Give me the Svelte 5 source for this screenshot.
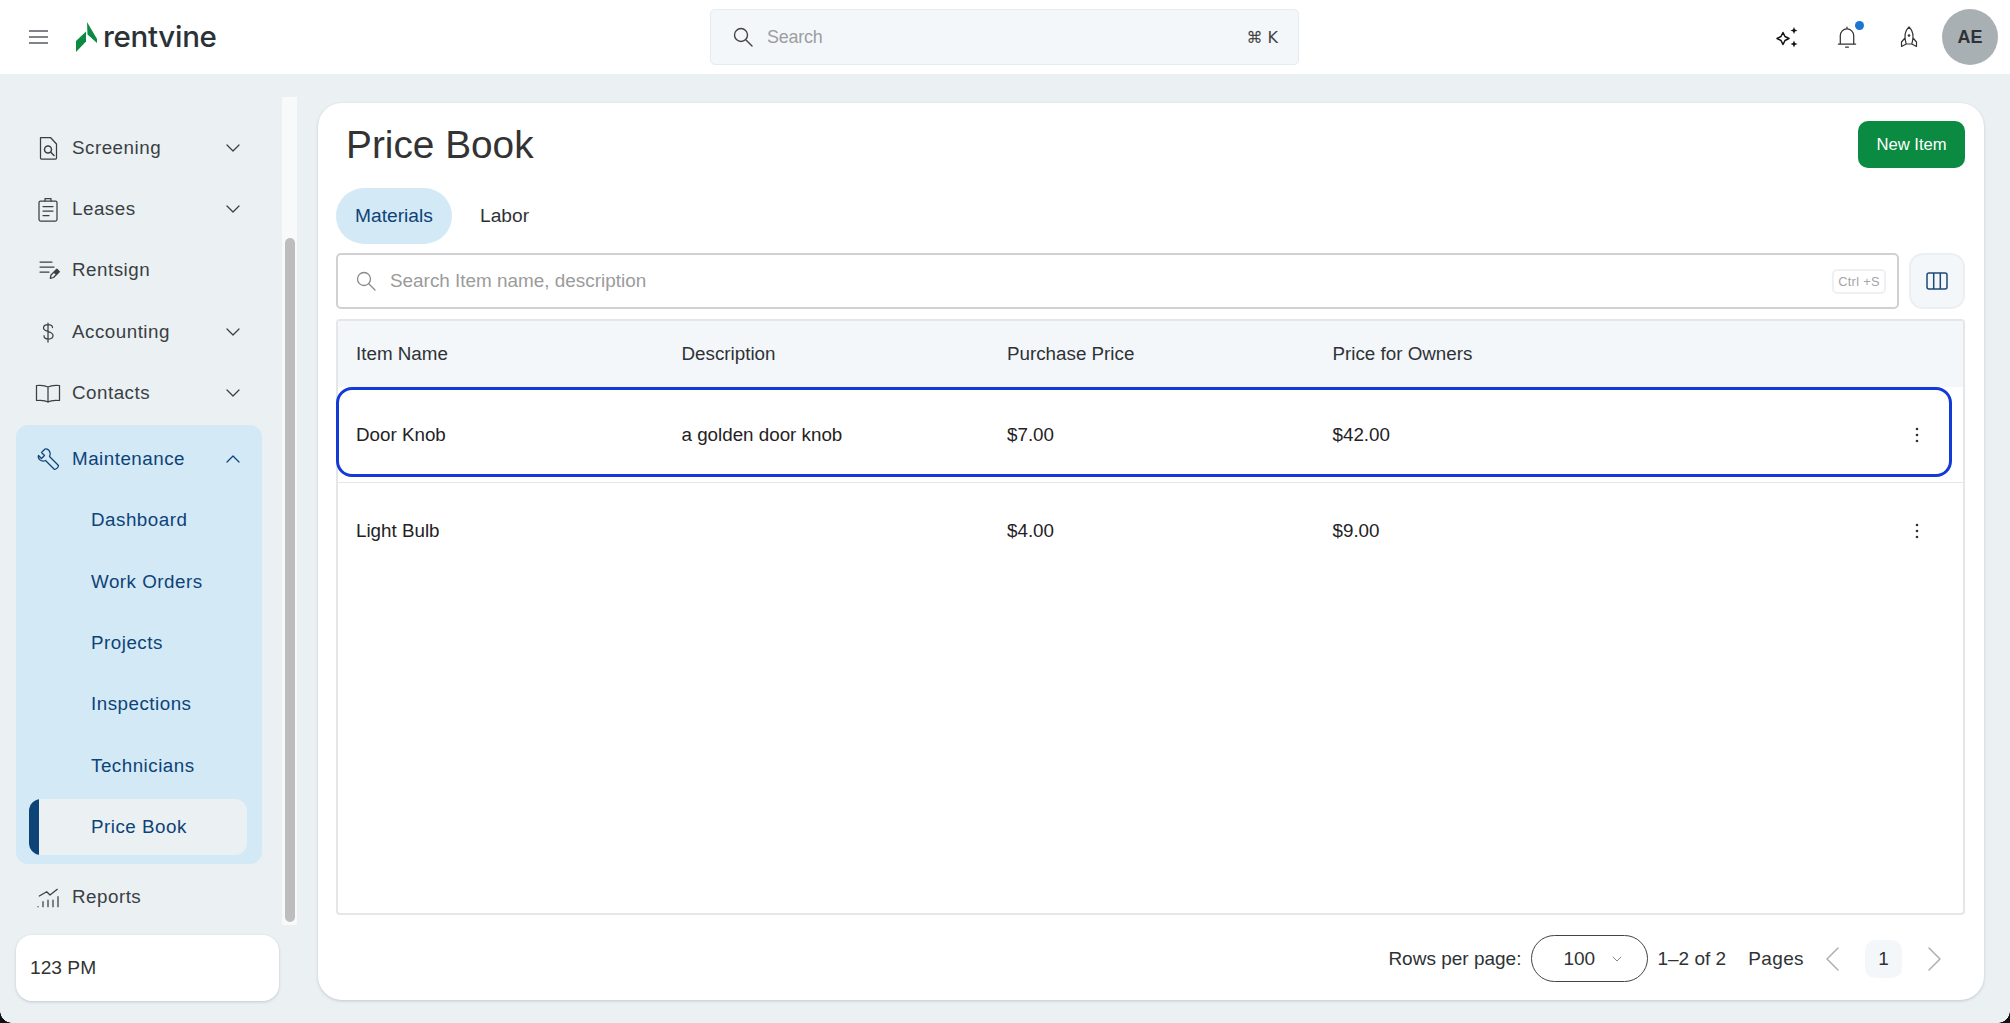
<script lang="ts">
	const topItems = [
		{ label: 'Screening', icon: 'screening', chevron: true },
		{ label: 'Leases', icon: 'leases', chevron: true },
		{ label: 'Rentsign', icon: 'rentsign', chevron: false },
		{ label: 'Accounting', icon: 'accounting', chevron: true },
		{ label: 'Contacts', icon: 'contacts', chevron: true },
	];
	const subItems = ['Dashboard', 'Work Orders', 'Projects', 'Inspections', 'Technicians'];
	const rows = [
		{ name: 'Door Knob', description: 'a golden door knob', purchase: '$7.00', owners: '$42.00', focused: true },
		{ name: 'Light Bulb', description: '', purchase: '$4.00', owners: '$9.00', focused: false },
	];
</script>

{#snippet navIcon(name)}
	<svg class="nav-icon" viewBox="0 0 28 28" fill="none" stroke="currentColor" stroke-width="1.25" stroke-linecap="round" stroke-linejoin="round">
		{#if name === 'screening'}
			<path d="M6.500 3.500h10l6 6.500v14a1 1 0 0 1-1 1h-14a1 1 0 0 1-1-1z" />
			<circle cx="14" cy="15.500" r="3.500" stroke-width="1.500" />
			<path d="M16.800 18.300l3.200 3.200" stroke-width="1.500" />
		{:else if name === 'leases'}
			<rect x="5" y="6" width="18" height="20" rx="1.500" />
			<path d="M11 6V3.500h6V6M9 11.500h10M9 16h10M9 20.500h6" />
		{:else if name === 'rentsign'}
			<path d="M6 6h12M6 11h14M6 16h9" />
			<path d="M16.300 22.300l.7-3.300 5.800-5.800 2.500 2.500-5.800 5.800z" />
			<path d="M19.500 16.500l3.300-3.300 2.500 2.500-3.300 3.300z" fill="currentColor" stroke="none" />
		{:else if name === 'accounting'}
			<path d="M18.500 9.500c0-2-2-3-4.500-3s-4.500 1.300-4.500 3.500c0 4.500 9.500 2.500 9.500 7.500 0 2.200-2 3.500-4.500 3.500s-4.500-1.200-4.500-3.300M14 5v19" />
		{:else if name === 'contacts'}
			<path d="M14 8c-2.500-1.500-6-2-11.500-1.500v15c5.500-.5 9-.2 11.500 1.500 2.500-1.700 6-2 11.500-1.500v-15C20 6 16.500 6.500 14 8zM14 8v15" />
		{:else if name === 'maintenance'}
			<path d="M11 4L7.500 7.500l3 3-3 3-3-3C3.500 13.500 7 17.500 11.500 15.500L20 24c1.500 1.500 5.500-2.500 4-4L15.500 11.500C17.500 7 14.500 3.500 11 4z" />
		{:else if name === 'reports'}
			<path d="M5.300 13l7.400-4.300L16 12l7.300-5.700M4 23.700v.1M9 18.700v5M14 17v6.700M19 17v6.700M24 13.700v10" />
		{/if}
	</svg>
{/snippet}

{#snippet chevron(up)}
	<svg class="chevron" viewBox="0 0 14 8" fill="none" stroke="currentColor" stroke-width="1.250" stroke-linecap="round" stroke-linejoin="round">
		<path d={up ? 'M1 7l6-6 6 6' : 'M1 1l6 6 6-6'} />
	</svg>
{/snippet}

<div class="app">
	<header class="topbar">
		<div class="brand">
			<svg class="burger" viewBox="0 0 20 14" fill="none" stroke="#555b60" stroke-width="1.500"><path d="M0 1h19M0 7h19M0 13h19" /></svg>
			<svg class="mark" viewBox="0 0 21 30">
				<path d="M11 0l10 17v4l-9.500-8.500z" fill="#0b8a41" />
				<path d="M0 19L10 9.500v10L0 30z" fill="#0b8a41" />
			</svg>
			<span class="wordmark">rentvine</span>
		</div>
		<div class="global-search">
			<svg class="glass" viewBox="0 0 20 20" fill="none" stroke="#444" stroke-width="1.400" stroke-linecap="round"><circle cx="8" cy="8" r="6.500" /><path d="M13 13l6 6" /></svg>
			<span class="placeholder">Search</span>
			<span class="hotkey">⌘ K</span>
		</div>
		<div class="actions">
			<svg class="act sparkle" viewBox="0 0 22 22" fill="#111">
				<path d="M7 6.500l2 4 4 2-4 2-2 4-2-4-4-2 4-2z" fill="none" stroke="#111" stroke-width="1.500" stroke-linejoin="round" />
				<path d="M18 1l1 2.500 2.500 1-2.500 1-1 2.500-1-2.500-2.500-1 2.500-1zM18 14.500l1 2.500 2.500 1-2.500 1-1 2.500-1-2.500-2.500-1 2.500-1z" />
			</svg>
			<span class="bell-wrap">
				<svg class="act bell" viewBox="0 0 20 24" fill="none" stroke="#333" stroke-width="1.300" stroke-linecap="round">
					<path d="M3 18.500V10a7 7 0 0 1 14 0v8.500M1 18.800h18M10 3V1.200M8.500 22h3" />
				</svg>
				<i class="dot"></i>
			</span>
			<svg class="act rocket" viewBox="0 0 18 22" fill="none" stroke="#333" stroke-width="1.200" stroke-linejoin="round">
				<path d="M9 1C6 4 5 7.500 5 10.500c0 2.500.5 5 1.200 7.500h5.600c.7-2.500 1.200-5 1.200-7.500C13 7.500 12 4 9 1zM5 12l-3.500 4v4.500L6.200 18M13 12l3.500 4v4.500L11.800 18" />
				<circle cx="9" cy="9.500" r="1.300" fill="#333" stroke="none" />
			</svg>
			<span class="avatar">AE</span>
		</div>
	</header>

	<div class="body">
		<aside class="sidebar">
			<div class="nav-wrap">
				<nav class="nav">
					{#each topItems as item}
						<div class="nav-row">
							{@render navIcon(item.icon)}
							<span class="nav-label">{item.label}</span>
							{#if item.chevron}{@render chevron(false)}{/if}
						</div>
					{/each}
					<div class="group">
						<div class="nav-row">
							{@render navIcon('maintenance')}
							<span class="nav-label">Maintenance</span>
							{@render chevron(true)}
						</div>
						{#each subItems as sub}
							<div class="sub-row">{sub}</div>
						{/each}
						<div class="sub-row active">Price Book</div>
					</div>
					<div class="nav-row">
						{@render navIcon('reports')}
						<span class="nav-label">Reports</span>
					</div>
				</nav>
				<div class="track"><div class="thumb"></div></div>
			</div>
			<div class="org-card">123 PM</div>
		</aside>

		<main class="main">
			<section class="card">
				<div class="card-head">
					<h1>Price Book</h1>
					<button type="button" class="primary">New Item</button>
				</div>

				<div class="tabs">
					<span class="tab tab-active">Materials</span>
					<span class="tab">Labor</span>
				</div>

				<div class="filter-row">
					<div class="filter">
						<svg class="filter-glass" viewBox="0 0 20 20" fill="none" stroke="#8a8a8a" stroke-width="1.300" stroke-linecap="round"><circle cx="8" cy="8" r="6.500" /><path d="M13 13l6 6" /></svg>
						<span class="filter-text">Search Item name, description</span>
						<kbd>Ctrl +S</kbd>
					</div>
					<button type="button" class="columns" aria-label="Columns">
						<svg viewBox="0 0 22 18" fill="none" stroke="#1d4a78" stroke-width="1.500"><rect x="1" y="1" width="20" height="16" rx="2" /><path d="M7.700 1v16M14.300 1v16" /></svg>
					</button>
				</div>

				<div class="table">
					<div class="thead grid">
						<span>Item Name</span>
						<span>Description</span>
						<span>Purchase Price</span>
						<span>Price for Owners</span>
					</div>
					{#each rows as row}
						<div class="trow grid" class:ruled={row.focused}>
							<span>{row.name}</span>
							<span>{row.description}</span>
							<span>{row.purchase}</span>
							<span>{row.owners}</span>
							<svg class="kebab" viewBox="0 0 4 16" fill="#333"><circle cx="2" cy="2" r="1.300" /><circle cx="2" cy="8" r="1.300" /><circle cx="2" cy="14" r="1.300" /></svg>
							{#if row.focused}<i class="focus-ring"></i>{/if}
						</div>
					{/each}
				</div>

				<footer class="pager">
					<span>Rows per page:</span>
					<div class="select">
						<span>100</span>
						<svg viewBox="0 0 10 6" fill="none" stroke="#888" stroke-width="1" stroke-linecap="round"><path d="M1 1l4 4 4-4" /></svg>
					</div>
					<span class="range">1–2 of 2</span>
					<span class="pages">Pages</span>
					<svg class="page-arrow prev" viewBox="0 0 13 24" fill="none" stroke="#aab0b4" stroke-width="1.500" stroke-linecap="round"><path d="M12 1L1 12l11 11" /></svg>
					<span class="page-num">1</span>
					<svg class="page-arrow" viewBox="0 0 13 24" fill="none" stroke="#aab0b4" stroke-width="1.500" stroke-linecap="round"><path d="M1 1l11 11L1 23" /></svg>
				</footer>
			</section>
		</main>
	</div>

	<i class="corner left"></i>
	<i class="corner right"></i>
</div>

<style>
	:global(body) { margin: 0; background: #ebf0f3; }

	.app { position: relative; width: 2010px; height: 1023px; overflow: hidden; background: #ebf0f3; font-family: "Liberation Sans", Arial, sans-serif; color: #2e3236; }

	.topbar { height: 74px; display: grid; grid-template-columns: 710px 589px 1fr; align-items: center; background: #fff; }
	.brand { display: flex; align-items: center; padding-left: 29px; }
	.burger { width: 20px; height: 14px; }
	.mark { width: 21px; height: 30px; margin-left: 27px; margin-top: -1px; }
	.wordmark { margin-left: 6px; margin-top: -2px; font-family: Inter, "Noto Sans", sans-serif; font-weight: 500; font-size: 29.500px; color: #2b3237; letter-spacing: -.3px; }

	.global-search { height: 56px; box-sizing: border-box; display: flex; align-items: center; padding: 0 20px 0 22px; background: #f4f7fa; border: 1px solid #e8ebee; border-radius: 5px; }
	.glass { width: 20px; height: 20px; }
	.placeholder { margin-left: 14px; font-size: 17.900px; color: #9a9ea2; letter-spacing: -.2px; }
	.hotkey { margin-left: auto; color: #444; font-family: "DejaVu Sans", "Liberation Sans", sans-serif; font-size: 16px; }

	.actions { display: flex; align-items: center; justify-content: flex-end; padding-right: 12px; }
	.act { display: block; }
	.sparkle { width: 22px; height: 22px; }
	.bell-wrap { position: relative; margin-left: 39px; display: block; }
	.bell { width: 20px; height: 23px; }
	.dot { position: absolute; right: -7px; top: -5px; width: 9px; height: 9px; border-radius: 50%; background: #1976d2; }
	.rocket { width: 18px; height: 22px; margin-left: 43px; }
	.avatar { width: 56px; height: 56px; margin-left: 24px; border-radius: 50%; background: #a9b0b3; display: flex; align-items: center; justify-content: center; font-weight: 700; font-size: 17.900px; color: #2e3236; }

	.body { display: flex; height: 949px; }

	.sidebar { width: 318px; flex: none; box-sizing: border-box; padding: 23px 0 0 16px; }
	.nav-wrap { display: flex; gap: 20px; height: 828px; }
	.nav { width: 246px; flex: none; padding-top: 20px; box-sizing: border-box; }
	.track { width: 15px; flex: none; box-sizing: border-box; padding: 141px 2px 3px 3px; background: #f8f9fa; }
	.thumb { height: 100%; background: #bdbdbd; border-radius: 5px; }

	.nav-row { height: 61.300px; display: flex; align-items: center; padding-left: 18px; padding-right: 22px; box-sizing: border-box; color: #3a3f44; }
	.nav-icon { width: 28px; height: 28px; flex: none; }
	.nav-label { margin-left: 10px; font-size: 18.800px; letter-spacing: .5px; flex: 1; }
	.chevron { width: 14px; height: 8px; flex: none; color: #3a3f44; }

	.group { margin: 2px 0 2px; padding: 3px 0 9px; background: #d3e9f6; border-radius: 12px; }
	.group .nav-row, .group .chevron { color: #0e4377; }
	.sub-row { height: 61.300px; display: flex; align-items: center; padding-left: 75px; font-size: 18.800px; letter-spacing: .5px; color: #0e4377; }
	.sub-row.active { height: 56px; margin: 3px 15px 0 13px; padding-left: 62px; border-radius: 12px; background: linear-gradient(90deg, #0e4377 10px, #ebf0f3 10px); }

	.org-card { margin-top: 10px; width: 263px; height: 66px; box-sizing: border-box; display: flex; align-items: center; padding-left: 14px; background: #fff; border-radius: 16px; box-shadow: 0 1px 3px rgba(90, 110, 130, .3); font-size: 19.200px; color: #333; }

	.main { flex: 1; box-sizing: border-box; padding-top: 29px; }
	.card { width: 1666px; height: 897px; box-sizing: border-box; padding: 18px 19px 0 18px; background: #fff; border-radius: 24px; box-shadow: 0 1px 3px rgba(90, 110, 130, .3); display: flex; flex-direction: column; }

	.card-head { display: flex; align-items: center; justify-content: space-between; height: 47px; }
	h1 { margin: 0 0 0 10px; font-weight: 400; font-size: 38.800px; color: #333; }
	.primary { width: 107px; height: 47px; border: 0; border-radius: 10px; background: #0b8a41; color: #fff; font: inherit; font-size: 16.640px; }

	.tabs { display: flex; margin-top: 20px; height: 56px; }
	.tab { padding: 0 19px; display: flex; align-items: center; border-radius: 28px; font-size: 19.200px; color: #2e3236; width: 116px; box-sizing: border-box; }
	.tab + .tab { padding-left: 28px; }
	.tab-active { background: #d3e9f6; color: #0e4377; }

	.filter-row { display: flex; gap: 10px; margin-top: 9px; height: 56px; }
	.filter { flex: 1; box-sizing: border-box; display: flex; align-items: center; padding: 0 11px 0 18px; border: 2px solid #cfd1d3; border-radius: 5px; }
	.filter-glass { width: 20px; height: 20px; flex: none; }
	.filter-text { margin-left: 14px; font-size: 18.900px; color: #9b9b9b; }
	kbd { margin-left: auto; width: 54px; height: 25px; box-sizing: border-box; display: flex; align-items: center; justify-content: center; border: 2px solid #eef0f1; border-radius: 5px; font-family: inherit; font-size: 12.800px; letter-spacing: .3px; color: #a5a5a5; }
	.columns { width: 56px; flex: none; display: flex; align-items: center; justify-content: center; padding: 0; border: 2px solid #eceff2; border-radius: 14px; background: #f4f7fa; }
	.columns svg { width: 22px; height: 18px; }

	.table { margin-top: 10px; height: 596px; box-sizing: border-box; border: 2px solid #e4e6e8; border-radius: 4px; }
	.grid { display: grid; grid-template-columns: repeat(4, 325.500px) 1fr; align-items: center; padding-left: 18px; font-size: 18.800px; }
	.thead { height: 66px; background: #f4f7fa; color: #2e3236; }
	.trow { position: relative; height: 95px; padding-top: 1px; box-sizing: border-box; color: #1f2225; }
	.ruled { height: 96px; border-bottom: 1px solid #e4e6e8; }
	.kebab { grid-column: 5; justify-self: end; width: 4px; height: 16px; margin-right: 44px; }
	.focus-ring { position: absolute; left: -2px; right: 11px; top: 0; height: 90px; box-sizing: border-box; border: 3px solid #1339d6; border-radius: 16px; pointer-events: none; }

	.pager { display: flex; align-items: center; justify-content: flex-end; height: 85px; padding: 2px 24px 0 0; box-sizing: border-box; font-size: 19px; color: #2e3236; }
	.select { width: 117px; height: 47px; margin-left: 10px; box-sizing: border-box; display: flex; align-items: center; padding-left: 31px; border: 1.500px solid #444; border-radius: 24px; }
	.select svg { width: 10px; height: 6px; margin-left: 17px; }
	.range { margin-left: 9px; }
	.pages { margin-left: 22px; letter-spacing: .4px; }
	.page-arrow { width: 13px; height: 24px; }
	.prev { margin-left: 22px; }
	.page-num { width: 37px; height: 38px; margin: 0 26px; display: flex; align-items: center; justify-content: center; border-radius: 10px; background: #f4f7fa; }

	.corner { position: absolute; bottom: 0; width: 12px; height: 12px; }
	.corner.left { left: 0; background: radial-gradient(circle at 100% 0, transparent 11.500px, #111 12px); }
	.corner.right { right: 0; background: radial-gradient(circle at 0 0, transparent 11.500px, #111 12px); }
</style>
